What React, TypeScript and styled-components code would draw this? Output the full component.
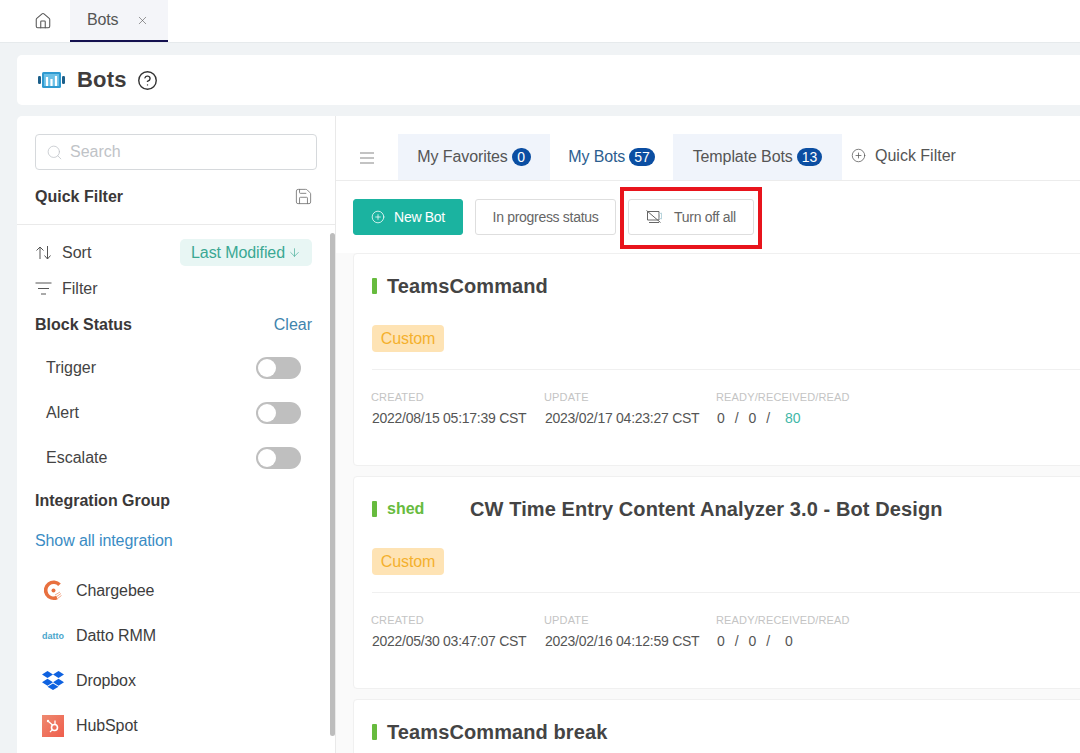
import React from 'react';
import styled, { createGlobalStyle } from 'styled-components';
import { ArrowDown, CircleHelp, Home, PlusCircle, Save, Search, X } from 'lucide-react';

const GlobalStyle = createGlobalStyle`
  html, body {
    margin: 0;
    padding: 0;
    height: 753px;
    overflow: hidden;
    background: #f0f3f5;
    font-family: "Liberation Sans", Arial, sans-serif;
    color: #333;
  }
  * { box-sizing: border-box; }
`;

const Page = styled.div`
  width: 1080px;
  height: 753px;
  overflow: hidden;
  display: flex;
  flex-direction: column;
`;

const TopBar = styled.div`
  height: 43px;
  flex: none;
  background: #fff;
  border-bottom: 1px solid #e6eaec;
  display: flex;
  padding-left: 34px;
`;

const HomeTab = styled.div`
  width: 36px;
  height: 42px;
  padding-top: 12px;
  color: #555;
`;

const Tab = styled.div`
  width: 98px;
  height: 42px;
  background: #f4f5f9;
  border-bottom: 2px solid #14114f;
  display: flex;
  align-items: center;
  padding: 0 0 0 17px;
  font-size: 16px;
  letter-spacing: -0.2px;
  color: #555;
  gap: 18px;
`;

const Body = styled.div`
  flex: 1;
  min-height: 0;
  padding: 12px 0 0 17px;
  display: flex;
  flex-direction: column;
  gap: 11px;
`;

const HeaderCard = styled.div`
  height: 50px;
  width: 1100px;
  flex: none;
  background: #fff;
  border-radius: 5px;
  display: flex;
  align-items: center;
  padding-left: 21px;
  color: #333;
`;

const PageTitle = styled.h1`
  margin: 0 10px 0 12px;
  font-size: 22px;
  font-weight: 700;
  letter-spacing: 0.2px;
  color: #403c3c;
`;

const Main = styled.div`
  flex: 1;
  min-height: 0;
  width: 1100px;
  background: #fff;
  border-radius: 5px 5px 0 0;
  display: flex;
`;

const Sidebar = styled.aside`
  width: 319px;
  flex: none;
  position: relative;
  border-right: 1px solid #e9e9e9;
  overflow: hidden;
`;

const SideTop = styled.div`
  height: 109px;
  padding: 18px 18px 0;
  border-bottom: 1px solid #eaeaea;
`;

const SearchBox = styled.div`
  height: 36px;
  border: 1px solid #d6d9dc;
  border-radius: 4px;
  display: flex;
  align-items: center;
  gap: 7px;
  padding-left: 10px;
  font-size: 16px;
  color: #bfc3c7;
`;

const QuickRow = styled.div`
  display: flex;
  justify-content: space-between;
  align-items: center;
  margin-top: 17px;
  padding-right: 4px;
  color: #777;
`;

const BoldLabel = styled.span`
  font-size: 16px;
  font-weight: 700;
  color: #3b3838;
`;

const SideBody = styled.div`
  padding: 14px 23px 0 18px;
  font-size: 16px;
`;

const SortRow = styled.div`
  height: 27px;
  display: flex;
  align-items: center;
  gap: 10px;
  color: #444;
`;

const SortPill = styled.span`
  margin-left: auto;
  height: 27px;
  width: 132px;
  background: #e8f6f4;
  border-radius: 5px;
  color: #3aa893;
  letter-spacing: -0.1px;
  display: flex;
  align-items: center;
  justify-content: center;
  gap: 3px;
`;

const FilterRow = styled(SortRow)`
  margin-top: 9px;
`;

const GroupHead = styled.div<{ $top: number }>`
  display: flex;
  justify-content: space-between;
  align-items: center;
  height: 20px;
  margin-top: ${({ $top }) => $top}px;
`;

const ClearLink = styled.span`
  color: #3f84ad;
`;

const StatusList = styled.div`
  margin-top: 10px;
`;

const StatusRow = styled.div`
  height: 45px;
  padding: 0 11px;
  display: flex;
  justify-content: space-between;
  align-items: center;
  color: #444;
`;

const Toggle = styled.span`
  width: 45px;
  height: 22px;
  border-radius: 11px;
  background: #bfbfbf;
  display: flex;
  align-items: center;
  padding-left: 2px;
  &::before {
    content: '';
    width: 18px;
    height: 18px;
    border-radius: 50%;
    background: #fff;
  }
`;

const ShowAll = styled.div`
  color: #3a8cc4;
  margin-top: 21px;
  letter-spacing: -0.1px;
`;

const IntegrationList = styled.div`
  margin-top: 18px;
`;

const IntegrationRow = styled.div`
  height: 45px;
  display: flex;
  align-items: center;
  padding-left: 7px;
  gap: 12px;
  color: #3d3d3d;
  letter-spacing: -0.1px;
`;

const LogoSlot = styled.span`
  width: 22px;
  height: 22px;
  flex: none;
  display: flex;
  align-items: center;
  justify-content: center;
`;

const DattoMark = styled.span`
  font-size: 9px;
  font-weight: 700;
  letter-spacing: 0;
  color: #4ba6cc;
`;

const ScrollThumb = styled.div`
  position: absolute;
  top: 117px;
  right: 0;
  width: 5px;
  height: 503px;
  border-radius: 3px;
  background: #bdbdbd;
`;

const Content = styled.section`
  flex: 1;
  min-width: 0;
  background: #fafafa;
  display: flex;
  flex-direction: column;
`;

const TabStrip = styled.div`
  height: 65px;
  flex: none;
  background: #fff;
  border-bottom: 1px solid #ececec;
  padding: 18px 0 0 24px;
  display: flex;
  align-items: stretch;
`;

const MenuButton = styled.div`
  width: 38px;
  color: #888;
  padding-top: 16px;
`;

const FilterTab = styled.div<{ $active?: boolean; $width: number }>`
  width: ${({ $width }) => $width}px;
  background: ${({ $active }) => ($active ? '#fff' : '#f0f4fb')};
  color: ${({ $active }) => ($active ? '#2c5e8f' : '#555')};
  font-size: 16px;
  letter-spacing: -0.1px;
  display: flex;
  align-items: center;
  justify-content: center;
  gap: 4px;
`;

const CountBadge = styled.span`
  min-width: 19px;
  height: 18px;
  padding: 0 5px;
  border-radius: 9px;
  background: #0b4ea2;
  color: #fff;
  font-size: 14px;
  letter-spacing: 0;
  display: flex;
  align-items: center;
  justify-content: center;
`;

const AddFilter = styled.div`
  display: flex;
  align-items: center;
  gap: 9px;
  margin: 0 0 3px 9px;
  font-size: 16px;
  color: #555;
`;

const Toolbar = styled.div`
  height: 72px;
  flex: none;
  background: #fff;
  padding: 18px 0 0 17px;
  display: flex;
  gap: 12px;
  position: relative;
`;

const ActionButton = styled.div<{ $primary?: boolean; $width: number; $gap?: number }>`
  width: ${({ $width }) => $width}px;
  height: 36px;
  border-radius: 3px;
  border: 1px solid ${({ $primary }) => ($primary ? '#1bb3a0' : '#dedede')};
  background: ${({ $primary }) => ($primary ? '#1bb3a0' : '#fff')};
  color: ${({ $primary }) => ($primary ? '#fff' : '#666')};
  font-size: 14px;
  letter-spacing: -0.3px;
  display: flex;
  align-items: center;
  justify-content: center;
  gap: ${({ $gap }) => $gap ?? 0}px;
`;

const Highlight = styled.div`
  position: absolute;
  left: 284px;
  top: 6px;
  width: 142px;
  height: 62px;
  border: 4px solid #e8141c;
  pointer-events: none;
`;

const CardList = styled.div`
  background: #fafafa;
  padding-left: 17px;
  display: flex;
  flex-direction: column;
  gap: 10px;
`;

const Card = styled.article`
  height: 213px;
  flex: none;
  background: #fff;
  border: 1px solid #f0f0f0;
  border-radius: 4px;
  padding: 20px 18px 0;
`;

const CardTitle = styled.div`
  display: flex;
  align-items: center;
  height: 24px;
`;

const StatusBar = styled.span`
  width: 5px;
  height: 16px;
  border-radius: 1px;
  background: #67bb3e;
  margin-right: 10px;
`;

const TitleText = styled.h2`
  margin: 0;
  font-size: 20px;
  font-weight: 700;
  color: #444;
  letter-spacing: 0.1px;
`;

const ClippedStatus = styled.span`
  width: 83px;
  font-size: 16px;
  font-weight: 700;
  color: #67bb3e;
`;

const CustomTag = styled.span`
  display: flex;
  width: 72px;
  height: 27px;
  margin-top: 27px;
  align-items: center;
  justify-content: center;
  background: #fee3b4;
  border-radius: 4px;
  color: #f4b02d;
  font-size: 16px;
  letter-spacing: -0.1px;
`;

const Rule = styled.div`
  height: 1px;
  background: #f0f0f0;
  margin-top: 17px;
`;

const Stats = styled.div`
  display: flex;
  margin-top: 21px;
`;

const StatColumn = styled.div<{ $width: number }>`
  width: ${({ $width }) => $width}px;
`;

const StatLabel = styled.div`
  font-size: 11px;
  line-height: 13px;
  letter-spacing: 0.15px;
  color: #c4c4c4;
  margin-left: -1px;
`;

const StatValue = styled.div`
  font-size: 14px;
  line-height: 16px;
  letter-spacing: -0.26px;
  margin-top: 6px;
  color: #555;
`;

const CountLine = styled(StatValue)`
  letter-spacing: 0;
  word-spacing: 6px;
`;

const ReadCount = styled.span<{ $accent: boolean }>`
  margin-left: 5px;
  color: ${({ $accent }) => ($accent ? '#3fb8a8' : '#555')};
`;

const BotsLogo = () => (
  <svg width="27" height="18" viewBox="0 0 27 18">
    <rect x="0" y="5" width="3" height="8" rx="1.2" fill="#1c5f8a" />
    <rect x="24" y="5" width="3" height="8" rx="1.2" fill="#1c5f8a" />
    <rect x="4" y="1" width="19" height="16" rx="1.5" fill="#2f9ad0" />
    <rect x="6" y="3" width="15" height="12" fill="#6cc0e6" />
    <path d="M9 6v9M13.500 8v7M18 5v10" stroke="#fff" strokeWidth="2.200" />
  </svg>
);

const SortIcon = () => (
  <svg width="17" height="17" viewBox="0 0 17 17" fill="none" stroke="#555" strokeWidth="1">
    <path d="M5 15V3M1.500 6.500L5 3l3.500 3.500M12.500 2v13M9.500 11.500l3 3.500 3-3.500" />
  </svg>
);

const FilterIcon = () => (
  <svg width="17" height="15" viewBox="0 0 17 15" fill="none" stroke="#555" strokeWidth="1">
    <path d="M0.500 2h16M3 7.500h11M6 13h5" />
  </svg>
);

const MenuIcon = () => (
  <svg width="14" height="12" viewBox="0 0 14 12" fill="none" stroke="currentColor" strokeWidth="1.200">
    <path d="M0 1h14M0 6h14M0 11h14" />
  </svg>
);

const BlockedScreenIcon = () => (
  <svg width="16" height="14" viewBox="0 0 16 14" fill="none" stroke="#666" strokeWidth="1">
    <path d="M1.500 1.500h11.500v8.500H1.500zM3 12.500h10M0.500 0.500l14 12" />
    <path d="M13 4l2.500-1v6L13 8" stroke="#b8d4dc" />
  </svg>
);

const ChargebeeLogo = () => (
  <svg width="20" height="21" viewBox="0 0 20 21" fill="none">
    <path d="M16.500 4.800A8 8 0 1 0 14 17.500" stroke="#e8703f" strokeWidth="3.600" />
    <circle cx="10.500" cy="10.500" r="2" fill="#e8703f" />
    <path d="M13 17l5-3.500M14.500 18.500l4-3M12 15l5-3" stroke="#f0a080" strokeWidth="0.900" />
  </svg>
);

const DropboxLogo = () => (
  <svg width="22" height="19" viewBox="0 0 22 19" fill="#0f62e0">
    <path d="M5.500 0L11 3.500 5.500 7 0 3.500zM16.500 0L22 3.500 16.500 7 11 3.500zM5.500 7.800L11 11.300 5.500 14.800 0 11.300zM16.500 7.800L22 11.300 16.500 14.800 11 11.300zM11 12.500l5.500 3.300L11 19l-5.500-3.200z" />
  </svg>
);

const HubSpotLogo = () => (
  <svg width="22" height="22" viewBox="0 0 22 22">
    <defs>
      <linearGradient id="hubspot-fill" x1="0" y1="0" x2="1" y2="1">
        <stop offset="0" stopColor="#ee8a70" />
        <stop offset="1" stopColor="#ef5d4c" />
      </linearGradient>
    </defs>
    <rect width="22" height="22" fill="url(#hubspot-fill)" />
    <circle cx="12.500" cy="12.500" r="3" fill="none" stroke="#fff" strokeWidth="1.600" />
    <path d="M6.500 6.500l4 3.500M13 5.500v4M8 17l2.500-2.500" stroke="#fff" strokeWidth="1.300" />
    <circle cx="6" cy="6" r="1.200" fill="#fff" />
  </svg>
);

const integrations = [
  { name: 'Chargebee', logo: <ChargebeeLogo /> },
  { name: 'Datto RMM', logo: <DattoMark>datto</DattoMark> },
  { name: 'Dropbox', logo: <DropboxLogo /> },
  { name: 'HubSpot', logo: <HubSpotLogo /> },
];

interface Bot {
  title: string;
  clipped?: string;
  stats?: { created: string; updated: string; read: string };
}

const bots: Bot[] = [
  { title: 'TeamsCommand', stats: { created: '2022/08/15 05:17:39 CST', updated: '2023/02/17 04:23:27 CST', read: '80' } },
  { title: 'CW Time Entry Content Analyzer 3.0 - Bot Design', clipped: 'shed', stats: { created: '2022/05/30 03:47:07 CST', updated: '2023/02/16 04:12:59 CST', read: '0' } },
  { title: 'TeamsCommand break' },
];

export default function App() {
  return (
    <Page>
      <GlobalStyle />
      <TopBar>
        <HomeTab><Home size={18} strokeWidth={1.4} /></HomeTab>
        <Tab>Bots <X size={13} strokeWidth={1.1} /></Tab>
      </TopBar>
      <Body>
        <HeaderCard>
          <BotsLogo />
          <PageTitle>Bots</PageTitle>
          <CircleHelp size={21} strokeWidth={1.6} />
        </HeaderCard>
        <Main>
          <Sidebar>
            <SideTop>
              <SearchBox><Search size={17} strokeWidth={1.1} />Search</SearchBox>
              <QuickRow>
                <BoldLabel>Quick Filter</BoldLabel>
                <Save size={19} strokeWidth={1.1} />
              </QuickRow>
            </SideTop>
            <SideBody>
              <SortRow><SortIcon />Sort<SortPill>Last Modified <ArrowDown size={13} strokeWidth={1.2} /></SortPill></SortRow>
              <FilterRow><FilterIcon />Filter</FilterRow>
              <GroupHead $top={13}>
                <BoldLabel>Block Status</BoldLabel>
                <ClearLink>Clear</ClearLink>
              </GroupHead>
              <StatusList>
                {['Trigger', 'Alert', 'Escalate'].map((label) => (
                  <StatusRow key={label}>{label}<Toggle /></StatusRow>
                ))}
              </StatusList>
              <GroupHead $top={11}><BoldLabel>Integration Group</BoldLabel></GroupHead>
              <ShowAll>Show all integration</ShowAll>
              <IntegrationList>
                {integrations.map((item) => (
                  <IntegrationRow key={item.name}>
                    <LogoSlot>{item.logo}</LogoSlot>
                    {item.name}
                  </IntegrationRow>
                ))}
              </IntegrationList>
            </SideBody>
            <ScrollThumb />
          </Sidebar>
          <Content>
            <TabStrip>
              <MenuButton><MenuIcon /></MenuButton>
              <FilterTab $width={152}>My Favorites <CountBadge>0</CountBadge></FilterTab>
              <FilterTab $width={123} $active>My Bots <CountBadge>57</CountBadge></FilterTab>
              <FilterTab $width={169}>Template Bots <CountBadge>13</CountBadge></FilterTab>
              <AddFilter><PlusCircle size={15} strokeWidth={1.2} />Quick Filter</AddFilter>
            </TabStrip>
            <Toolbar>
              <ActionButton $primary $width={110} $gap={9}><PlusCircle size={14} strokeWidth={1.3} />New Bot</ActionButton>
              <ActionButton $width={141}>In progress status</ActionButton>
              <ActionButton $width={126} $gap={12}><BlockedScreenIcon />Turn off all</ActionButton>
              <Highlight />
            </Toolbar>
            <CardList>
              {bots.map((bot) => (
                <Card key={bot.title}>
                  <CardTitle>
                    <StatusBar />
                    {bot.clipped && <ClippedStatus>{bot.clipped}</ClippedStatus>}
                    <TitleText>{bot.title}</TitleText>
                  </CardTitle>
                  {bot.stats && (
                    <>
                      <CustomTag>Custom</CustomTag>
                      <Rule />
                      <Stats>
                        <StatColumn $width={173}>
                          <StatLabel>CREATED</StatLabel>
                          <StatValue>{bot.stats.created}</StatValue>
                        </StatColumn>
                        <StatColumn $width={172}>
                          <StatLabel>UPDATE</StatLabel>
                          <StatValue>{bot.stats.updated}</StatValue>
                        </StatColumn>
                        <StatColumn $width={200}>
                          <StatLabel>READY/RECEIVED/READ</StatLabel>
                          <CountLine>0 / 0 / <ReadCount $accent={bot.stats.read !== '0'}>{bot.stats.read}</ReadCount></CountLine>
                        </StatColumn>
                      </Stats>
                    </>
                  )}
                </Card>
              ))}
            </CardList>
          </Content>
        </Main>
      </Body>
    </Page>
  );
}
